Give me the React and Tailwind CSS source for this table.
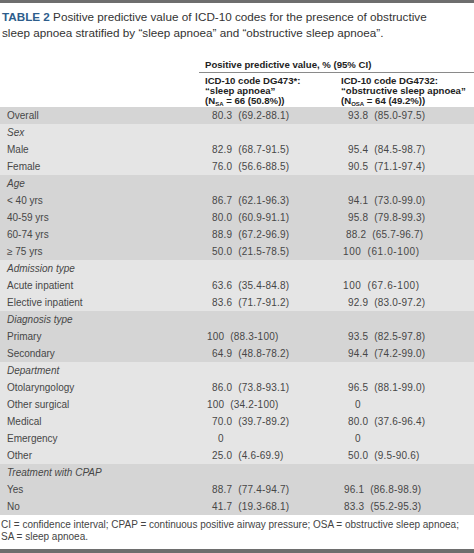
import React from 'react'

const rows = [
  { label: 'Overall', a: ['80.3', '(69.2-88.1)'], b: ['93.8', '(85.0-97.5)'], shade: 'dark' },
  { label: 'Sex', head: true, shade: 'light' },
  { label: 'Male', a: ['82.9', '(68.7-91.5)'], b: ['95.4', '(84.5-98.7)'], shade: 'light' },
  { label: 'Female', a: ['76.0', '(56.6-88.5)'], b: ['90.5', '(71.1-97.4)'], shade: 'light' },
  { label: 'Age', head: true, shade: 'dark' },
  { label: '< 40 yrs', a: ['86.7', '(62.1-96.3)'], b: ['94.1', '(73.0-99.0)'], shade: 'dark' },
  { label: '40-59 yrs', a: ['80.0', '(60.9-91.1)'], b: ['95.8', '(79.8-99.3)'], shade: 'dark' },
  { label: '60-74 yrs', a: ['88.9', '(67.2-96.9)'], b: ['88.2', '(65.7-96.7)'], bPad: 'pl-[4px]', shade: 'dark' },
  { label: '≥ 75 yrs', a: ['50.0', '(21.5-78.5)'], b: ['100', '(61.0-100)'], bPad: 'pl-[1px] tracking-[0.6px]', shade: 'dark' },
  { label: 'Admission type', head: true, shade: 'light' },
  { label: 'Acute inpatient', a: ['63.6', '(35.4-84.8)'], b: ['100', '(67.6-100)'], bPad: 'pl-[1px] tracking-[0.6px]', shade: 'light' },
  { label: 'Elective inpatient', a: ['83.6', '(71.7-91.2)'], b: ['92.9', '(83.0-97.2)'], shade: 'light' },
  { label: 'Diagnosis type', head: true, shade: 'dark' },
  { label: 'Primary', a: ['100', '(88.3-100)'], aPad: 'pl-[2px]', b: ['93.5', '(82.5-97.8)'], shade: 'dark' },
  { label: 'Secondary', a: ['64.9', '(48.8-78.2)'], b: ['94.4', '(74.2-99.0)'], shade: 'dark' },
  { label: 'Department', head: true, shade: 'light' },
  { label: 'Otolaryngology', a: ['86.0', '(73.8-93.1)'], b: ['96.5', '(88.1-99.0)'], shade: 'light' },
  { label: 'Other surgical', a: ['100', '(34.2-100)'], aPad: 'pl-[2px]', b: ['0'], bPad: 'pl-[13px]', shade: 'light' },
  { label: 'Medical', a: ['70.0', '(39.7-89.2)'], b: ['80.0', '(37.6-96.4)'], shade: 'light' },
  { label: 'Emergency', a: ['0'], aPad: 'pl-[13px]', b: ['0'], bPad: 'pl-[13px]', shade: 'light' },
  { label: 'Other', a: ['25.0', '(4.6-69.9)'], b: ['50.0', '(9.5-90.6)'], shade: 'light' },
  { label: 'Treatment with CPAP', head: true, shade: 'dark' },
  { label: 'Yes', a: ['88.7', '(77.4-94.7)'], b: ['96.1', '(86.8-98.9)'], bPad: 'pl-[2px]', shade: 'dark' },
  { label: 'No', a: ['41.7', '(19.3-68.1)'], b: ['83.3', '(55.2-95.3)'], bPad: 'pl-[2px]', shade: 'dark' },
]

function Value({ parts, pad }) {
  if (!parts) return null
  return (
    <span className={`flex gap-[6px] tracking-[0.2px] ${pad}`}>
      {parts.map((p, i) => (
        <span key={i}>{p}</span>
      ))}
    </span>
  )
}

export default function App() {
  return (
    <div className="w-[474px] h-[553px] bg-white flex flex-col overflow-hidden font-['Liberation_Sans',Arial,sans-serif]">
      <div className="h-[3px] bg-[#6e6e6e]" />

      <p className="w-[432px] pt-[6px] pl-[2px] text-[11.7px] leading-[15.5px] text-[#333]">
        <span className="font-bold text-[#2d5d8c]">TABLE 2</span> Positive predictive value of ICD-10 codes for the presence of obstructive sleep apnoea stratified by “sleep apnoea” and “obstructive sleep apnoea”.
      </p>

      <div className="mt-[19px] ml-[199px] text-[9.6px] font-bold text-[#222]">
        <div className="pl-[6px] leading-[12px] pb-[1px] border-b border-[#8a8a8a]">
          Positive predictive value, % (95% CI)
        </div>
        <div className="flex pt-[3px] pb-[1px] leading-[10px]">
          <div className="w-[136px] pl-[6px]">
            <div>ICD-10 code DG473*:</div>
            <div>“sleep apnoea”</div>
            <div>
              (N<sub className="text-[6px]">SA</sub> = 66 (50.8%))
            </div>
          </div>
          <div className="pl-[6px]">
            <div>ICD-10 code DG4732:</div>
            <div>“obstructive sleep apnoea”</div>
            <div>
              (N<sub className="text-[6px]">OSA</sub> = 64 (49.2%))
            </div>
          </div>
        </div>
      </div>

      <div className="text-[10px] text-[#474747]">
        {rows.map((r) => (
          <div
            key={r.label}
            className={`flex items-center h-[17px] ${r.shade === 'dark' ? 'bg-[#d5d5d5]' : 'bg-[#e5e5e5]'}`}
          >
            <div className={`w-[205px] pl-[7px] ${r.head ? 'italic' : ''}`}>{r.label}</div>
            <div className="w-[137px]">
              <Value parts={r.a} pad={r.aPad || 'pl-[7px]'} />
            </div>
            <div className="flex-1">
              <Value parts={r.b} pad={r.bPad || 'pl-[6px]'} />
            </div>
          </div>
        ))}
      </div>

      <div className="pt-[4px] pl-[1px] text-[10px] leading-[12px] text-[#444]">
        <div>CI = confidence interval; CPAP = continuous positive airway pressure; OSA = obstructive sleep apnoea;</div>
        <div>SA = sleep apnoea.</div>
      </div>

      <div className="mt-auto h-[4px] bg-[#6e6e6e]" />
    </div>
  )
}
